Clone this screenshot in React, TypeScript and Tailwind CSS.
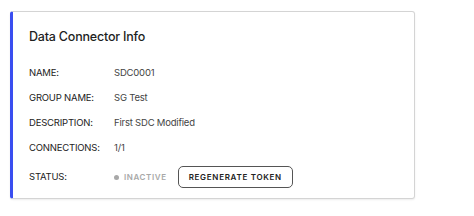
import React from 'react';

const rows = [
    { label: 'NAME:', value: 'SDC0001' },
    { label: 'GROUP NAME:', value: 'SG Test' },
    { label: 'DESCRIPTION:', value: 'First SDC Modified' },
    { label: 'CONNECTIONS:', value: '1/1' },
];

export default function App() {
    return (
        <div className="w-[474px] h-[216px] bg-white pt-[11px] pl-[10px] font-['Inter',sans-serif]">
            <div className="w-[405px] h-[188px] rounded-[3px] border border-[#d4d4d4] border-l-[3px] border-l-[#3a4ef0] shadow-[0_1px_2px_rgba(0,0,0,0.08)] pl-[16px] pt-[17px]">
                <h2 className="text-[12.5px] font-medium text-[#1f1f1f] leading-[16px] tracking-[-0.2px]">Data Connector Info</h2>
                <div className="mt-[16px] flex flex-col">
                    {rows.map((r) => (
                        <div key={r.label} className="flex items-center h-[25px] text-[9.5px] tracking-[-0.2px]">
                            <span className="w-[85px] text-[#222]">{r.label}</span>
                            <span className="text-[#444]">{r.value}</span>
                        </div>
                    ))}
                    <div className="flex items-center h-[32px] text-[9.5px] tracking-[-0.2px]">
                        <span className="w-[85px] text-[#222]">STATUS:</span>
                        <span className="flex items-center gap-[5px] text-[8px] font-semibold tracking-[0.6px] text-[#a8a8a8]">
                            <span className="w-[5px] h-[5px] rounded-full bg-[#a8a8a8]"></span>
                            INACTIVE
                        </span>
                        <button className="ml-[11px] h-[22px] px-[10px] rounded-[5px] border border-[#555] text-[8px] font-semibold tracking-[0.7px] text-[#222]">
                            REGENERATE TOKEN
                        </button>
                    </div>
                </div>
            </div>
        </div>
    );
}
